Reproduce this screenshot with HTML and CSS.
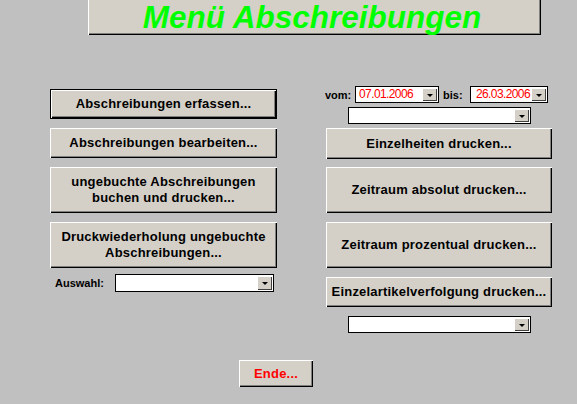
FILE: index.html
```html
<!DOCTYPE html>
<html lang="de">
<head>
<meta charset="utf-8">
<title>Menü Abschreibungen</title>
<link rel="stylesheet" href="styles.css">
</head>
<body>
<div class="title"><span class="title-text">Menü Abschreibungen</span></div>
<div class="main">
  <div class="col col-left">
    <div class="btn btn-default h30">Abschreibungen erfassen...</div>
    <div class="btn h30">Abschreibungen bearbeiten...</div>
    <div class="btn h46">ungebuchte Abschreibungen<br>buchen und drucken...</div>
    <div class="btn h46">Druckwiederholung ungebuchte<br>Abschreibungen...</div>
    <div class="auswahl">
      <span class="lbl lbl-auswahl">Auswahl:</span>
      <div class="combo combo-auswahl"><span class="combo-text"></span><span class="combo-btn"><span class="arrow"></span></span></div>
    </div>
  </div>
  <div class="col col-right">
    <div class="daterow">
      <span class="lbl lbl-vom">vom:</span>
      <div class="combo combo-date1"><span class="combo-text">07.01.2006</span><span class="combo-btn"><span class="arrow"></span></span></div>
      <span class="lbl lbl-bis">bis:</span>
      <div class="combo combo-date2"><span class="combo-text right">26.03.2006</span><span class="combo-btn"><span class="arrow"></span></span></div>
    </div>
    <div class="combo combo-wide mt3"><span class="combo-text"></span><span class="combo-btn"><span class="arrow"></span></span></div>
    <div class="btn h31 mt4">Einzelheiten drucken...</div>
    <div class="btn h46 mt8">Zeitraum absolut drucken...</div>
    <div class="btn h46 mt9">Zeitraum prozentual drucken...</div>
    <div class="btn h30 mt9">Einzelartikelverfolgung drucken...</div>
    <div class="combo combo-wide mt9"><span class="combo-text"></span><span class="combo-btn"><span class="arrow"></span></span></div>
  </div>
</div>
<div class="footer">
  <div class="btn btn-ende">Ende...</div>
</div>
</body>
</html>
```

FILE: styles.css
```css
html, body {
  margin: 0;
  padding: 0;
}
body {
  background: #c0c0c0;
  font-family: "Liberation Sans", Arial, sans-serif;
  width: 577px;
  height: 404px;
  overflow: hidden;
  color: #000;
}
.title {
  box-sizing: border-box;
  margin-left: 88px;
  width: 453px;
  height: 35px;
  background: #d4d0c8;
  box-shadow: inset 1px 0 #fff, inset -1px -1px #000, inset -2px -2px #808080;
  text-align: center;
  overflow: hidden;
}
.title-text {
  display: block;
  font-size: 31.5px;
  line-height: 34px;
  font-weight: bold;
  font-style: italic;
  color: #00ff00;
  padding-right: 5px;
}
.main {
  display: flex;
  align-items: flex-start;
  padding-top: 52px;
}
.col {
  display: flex;
  flex-direction: column;
}
.col-left {
  margin-left: 50px;
  width: 227px;
  padding-top: 2px;
  gap: 9px;
}
.col-right {
  margin-left: 49px;
  width: 226px;
}
.btn {
  box-sizing: border-box;
  background: #d4d0c8;
  display: flex;
  align-items: center;
  justify-content: center;
  text-align: center;
  font-size: 13px;
  line-height: 16px;
  font-weight: bold;
  letter-spacing: 0.2px;
  box-shadow: inset 1px 1px #fff, inset -1px -1px #000, inset -2px -2px #808080;
}
.btn-default {
  border: 1px solid #000;
}
.h30 { height: 30px; }
.h31 { height: 31px; }
.h46 { height: 46px; }
.mt3 { margin-top: 3px; }
.mt4 { margin-top: 4px; }
.mt8 { margin-top: 8px; }
.mt9 { margin-top: 9px; }
.lbl {
  font-size: 11px;
  font-weight: bold;
}
.auswahl {
  display: flex;
  align-items: center;
  margin-top: -3px;
}
.lbl-auswahl {
  width: 60px;
  padding-left: 5px;
}
.combo {
  box-sizing: border-box;
  display: flex;
  background: #fff;
  border: 1px solid #000;
  height: 17px;
}
.combo-auswahl {
  width: 159px;
  height: 18px;
}
.combo-text {
  flex: 1;
  font-size: 12px;
  line-height: 15px;
  color: #ff0000;
  padding-left: 3px;
  letter-spacing: -0.6px;
  overflow: hidden;
  white-space: nowrap;
}
.combo-text.right {
  text-align: right;
  padding-left: 0;
  padding-right: 1px;
}
.combo-btn {
  width: 15px;
  margin: 1px 1px 1px 0;
  background: #d4d0c8;
  box-shadow: inset 1px 1px #fff, inset -1px -1px #404040;
  display: flex;
  align-items: center;
  justify-content: center;
}
.arrow {
  width: 0;
  height: 0;
  border-left: 3px solid transparent;
  border-right: 3px solid transparent;
  border-top: 3px solid #000;
  margin-top: 1px;
}
.daterow {
  display: flex;
  align-items: center;
  height: 17px;
  margin-left: -1px;
  margin-top: -1px;
  margin-bottom: 1px;
}
.lbl-vom {
  width: 30px;
}
.combo-date1 {
  width: 84px;
}
.lbl-bis {
  width: 27px;
  margin-left: 4px;
}
.combo-date2 {
  width: 78px;
}
.combo-wide {
  margin-left: 22px;
  width: 183px;
}
.footer {
  padding-left: 239px;
  margin-top: 27px;
}
.btn-ende {
  width: 74px;
  height: 27px;
  color: #ff0000;
}
```
